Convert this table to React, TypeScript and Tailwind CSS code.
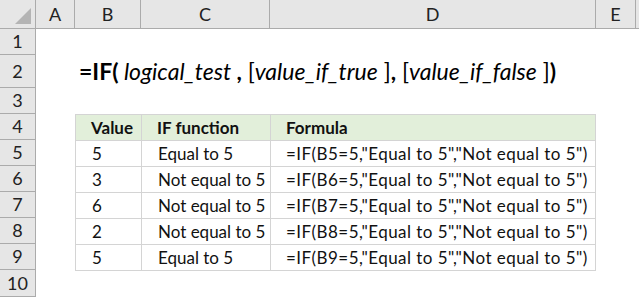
const COLS = ['A', 'B', 'C', 'D', 'E']

const rows = [
  { value: '5', fn: 'Equal to 5', ref: 'B5' },
  { value: '3', fn: 'Not equal to 5', ref: 'B6' },
  { value: '6', fn: 'Not equal to 5', ref: 'B7' },
  { value: '2', fn: 'Not equal to 5', ref: 'B8' },
  { value: '5', fn: 'Equal to 5', ref: 'B9' },
]

const font = { fontFamily: 'Lato, "Open Sans", sans-serif' }

function RowHead({ n, h }: { n: number; h: string }) {
  return (
    <div className={`${h} flex items-center justify-center bg-[#e6e6e6] border-b border-r border-[#ababab] text-[18px] text-[#222]`}>
      {n}
    </div>
  )
}

export default function App() {
  return (
    <div className="w-[639px] h-[297px] bg-white overflow-hidden text-[#111]" style={font}>
      {/* column header */}
      <div className="flex h-[29px] bg-[#e6e6e6] border-b border-[#ababab]">
        <div className="w-[36px] relative border-r border-[#ababab]">
          <div className="absolute right-[4px] bottom-[4px] w-0 h-0 border-l-[16px] border-l-transparent border-b-[16px] border-b-[#b4b4b4]" />
        </div>
        {COLS.map((c, i) => (
          <div
            key={c}
            className={`flex items-center justify-center border-r border-[#ababab] text-[18px] text-[#222] ${
              ['w-[39px]', 'w-[66px]', 'w-[129px]', 'w-[326px]', 'w-[40px]'][i]
            }`}
          >
            {c}
          </div>
        ))}
      </div>

      <div className="flex">
        <div className="w-[36px] flex flex-col">
          <RowHead n={1} h="h-[26px]" />
          <RowHead n={2} h="h-[33px]" />
          <RowHead n={3} h="h-[26px]" />
          <RowHead n={4} h="h-[26px]" />
          <RowHead n={5} h="h-[26px]" />
          <RowHead n={6} h="h-[26px]" />
          <RowHead n={7} h="h-[26px]" />
          <RowHead n={8} h="h-[26px]" />
          <RowHead n={9} h="h-[26px]" />
          <RowHead n={10} h="h-[27px]" />
        </div>

        <div className="flex-1 flex flex-col">
          <div className="h-[26px]" />
          <div className="h-[33px] flex items-center pl-[43px] text-[23px] text-black whitespace-nowrap">
            <b>=IF(</b>
            <i>&nbsp;logical_test&nbsp;</i>
            <b>,</b>
            <span>&nbsp;[</span>
            <i>value_if_true</i>
            <span>&nbsp;]</span>
            <b>,</b>
            <span>&nbsp;[</span>
            <i>value_if_false</i>
            <span>&nbsp;]</span>
            <b>)</b>
          </div>
          <div className="h-[26px]" />

          {/* table */}
          <div className="ml-[39px] w-[521px] border-t border-l border-[#d4d4d4] text-[17px]">
            <div className="flex h-[26px] bg-[#e2efda] font-bold">
              <div className="w-[66px] pl-[15px] flex items-center border-r border-b border-[#d4d4d4]">Value</div>
              <div className="w-[129px] pl-[15px] flex items-center border-r border-b border-[#d4d4d4]">IF function</div>
              <div className="flex-1 pl-[15px] flex items-center border-r border-b border-[#d4d4d4]">Formula</div>
            </div>
            {rows.map((r) => (
              <div key={r.ref} className="flex h-[26px]">
                <div className="w-[66px] pl-[16px] flex items-center border-r border-b border-[#d4d4d4]">{r.value}</div>
                <div className="w-[129px] pl-[16px] flex items-center border-r border-b border-[#d4d4d4]">{r.fn}</div>
                <div className="flex-1 pl-[15px] flex items-center border-r border-b border-[#d4d4d4] whitespace-nowrap tracking-[0.45px]">
                  =IF({r.ref}=5,"Equal to 5","Not equal to 5")
                </div>
              </div>
            ))}
          </div>
        </div>
      </div>
    </div>
  )
}
